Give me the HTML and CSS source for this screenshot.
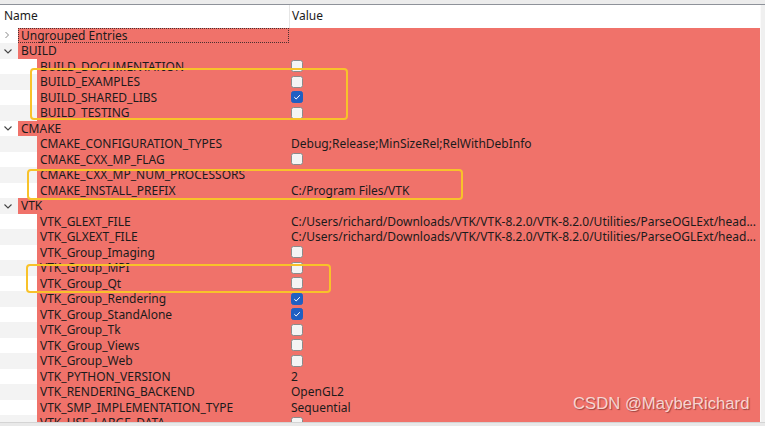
FILE: index.html
```html
<!DOCTYPE html>
<html>
<head>
<meta charset="utf-8">
<link rel="stylesheet" href="styles.css">
</head>
<body>
<div class="window">
  <div class="topband"></div>
  <div class="main">
    <div class="tree">
      <div class="header">
        <div class="hname">Name</div>
        <div class="hvalue">Value</div>
      </div>
      <div class="rows">
        <div class="row group">
          <div class="ind"><svg class="arr" width="8" height="8" viewBox="0 0 8 8"><path d="M2.5 1 L5.5 4 L2.5 7" fill="none" stroke="#8a8a8a" stroke-width="1"/></svg></div>
          <div class="red"><div class="name focus">Ungrouped Entries</div><div class="value"></div></div>
        </div>
        <div class="row group">
          <div class="ind"><svg class="arr" width="10" height="8" viewBox="0 0 10 8"><path d="M1.5 2.5 L5 6 L8.5 2.5" fill="none" stroke="#444" stroke-width="1.1"/></svg></div>
          <div class="red"><div class="name">BUILD</div><div class="value"></div></div>
        </div>
        <div class="row child"><div class="ind"></div><div class="red"><div class="name">BUILD_DOCUMENTATION</div><div class="value"><span class="cb"></span></div></div></div>
        <div class="row child"><div class="ind"></div><div class="red"><div class="name">BUILD_EXAMPLES</div><div class="value"><span class="cb"></span></div></div></div>
        <div class="row child"><div class="ind"></div><div class="red"><div class="name">BUILD_SHARED_LIBS</div><div class="value"><span class="cb on"><svg width="12" height="12" viewBox="0 0 12 12"><path d="M3.3 6.2 L5.2 8 L8.8 4.2" fill="none" stroke="#fff" stroke-width="1"/></svg></span></div></div></div>
        <div class="row child"><div class="ind"></div><div class="red"><div class="name">BUILD_TESTING</div><div class="value"><span class="cb"></span></div></div></div>
        <div class="row group">
          <div class="ind"><svg class="arr" width="10" height="8" viewBox="0 0 10 8"><path d="M1.5 2.5 L5 6 L8.5 2.5" fill="none" stroke="#444" stroke-width="1.1"/></svg></div>
          <div class="red"><div class="name">CMAKE</div><div class="value"></div></div>
        </div>
        <div class="row child"><div class="ind"></div><div class="red"><div class="name">CMAKE_CONFIGURATION_TYPES</div><div class="value">Debug;Release;MinSizeRel;RelWithDebInfo</div></div></div>
        <div class="row child"><div class="ind"></div><div class="red"><div class="name">CMAKE_CXX_MP_FLAG</div><div class="value"><span class="cb"></span></div></div></div>
        <div class="row child"><div class="ind"></div><div class="red"><div class="name">CMAKE_CXX_MP_NUM_PROCESSORS</div><div class="value"></div></div></div>
        <div class="row child"><div class="ind"></div><div class="red"><div class="name">CMAKE_INSTALL_PREFIX</div><div class="value">C:/Program Files/VTK</div></div></div>
        <div class="row group">
          <div class="ind"><svg class="arr" width="10" height="8" viewBox="0 0 10 8"><path d="M1.5 2.5 L5 6 L8.5 2.5" fill="none" stroke="#444" stroke-width="1.1"/></svg></div>
          <div class="red"><div class="name">VTK</div><div class="value"></div></div>
        </div>
        <div class="row child"><div class="ind"></div><div class="red"><div class="name">VTK_GLEXT_FILE</div><div class="value">C:/Users/richard/Downloads/VTK/VTK-8.2.0/VTK-8.2.0/Utilities/ParseOGLExt/head...</div></div></div>
        <div class="row child"><div class="ind"></div><div class="red"><div class="name">VTK_GLXEXT_FILE</div><div class="value">C:/Users/richard/Downloads/VTK/VTK-8.2.0/VTK-8.2.0/Utilities/ParseOGLExt/head...</div></div></div>
        <div class="row child"><div class="ind"></div><div class="red"><div class="name">VTK_Group_Imaging</div><div class="value"><span class="cb"></span></div></div></div>
        <div class="row child"><div class="ind"></div><div class="red"><div class="name">VTK_Group_MPI</div><div class="value"><span class="cb"></span></div></div></div>
        <div class="row child"><div class="ind"></div><div class="red"><div class="name">VTK_Group_Qt</div><div class="value"><span class="cb"></span></div></div></div>
        <div class="row child"><div class="ind"></div><div class="red"><div class="name">VTK_Group_Rendering</div><div class="value"><span class="cb on"><svg width="12" height="12" viewBox="0 0 12 12"><path d="M3.3 6.2 L5.2 8 L8.8 4.2" fill="none" stroke="#fff" stroke-width="1"/></svg></span></div></div></div>
        <div class="row child"><div class="ind"></div><div class="red"><div class="name">VTK_Group_StandAlone</div><div class="value"><span class="cb on"><svg width="12" height="12" viewBox="0 0 12 12"><path d="M3.3 6.2 L5.2 8 L8.8 4.2" fill="none" stroke="#fff" stroke-width="1"/></svg></span></div></div></div>
        <div class="row child"><div class="ind"></div><div class="red"><div class="name">VTK_Group_Tk</div><div class="value"><span class="cb"></span></div></div></div>
        <div class="row child"><div class="ind"></div><div class="red"><div class="name">VTK_Group_Views</div><div class="value"><span class="cb"></span></div></div></div>
        <div class="row child"><div class="ind"></div><div class="red"><div class="name">VTK_Group_Web</div><div class="value"><span class="cb"></span></div></div></div>
        <div class="row child"><div class="ind"></div><div class="red"><div class="name">VTK_PYTHON_VERSION</div><div class="value">2</div></div></div>
        <div class="row child"><div class="ind"></div><div class="red"><div class="name">VTK_RENDERING_BACKEND</div><div class="value">OpenGL2</div></div></div>
        <div class="row child"><div class="ind"></div><div class="red"><div class="name">VTK_SMP_IMPLEMENTATION_TYPE</div><div class="value">Sequential</div></div></div>
        <div class="row child"><div class="ind"></div><div class="red"><div class="name">VTK_USE_LARGE_DATA</div><div class="value"><span class="cb"></span></div></div></div>
      </div>
    </div>
    <div class="vscroll"></div>
  </div>
  <div class="hscroll"></div>

  <div class="mark mark1"></div>
  <div class="mark mark2"></div>
  <div class="mark mark3"></div>
  <div class="watermark">CSDN @MaybeRichard</div>
</div>
</body>
</html>
```
FILE: styles.css
```css
html, body {
  margin: 0;
  padding: 0;
}
body {
  width: 765px;
  height: 426px;
  overflow: hidden;
  background: #ffffff;
  font-family: "Noto Sans", "Open Sans", sans-serif;
  font-size: 12px;
  color: #1b1b1b;
}
.window {
  position: relative;
  width: 765px;
  height: 426px;
  display: flex;
  flex-direction: column;
  overflow: hidden;
}
.topband {
  height: 4px;
  flex: none;
  background: #ececec;
  border-bottom: 1px solid #8e929a;
}
.main {
  flex: 1;
  display: flex;
  min-height: 0;
}
.tree {
  width: 760px;
  flex: none;
  display: flex;
  flex-direction: column;
  overflow: hidden;
}
.header {
  height: 22.5px;
  flex: none;
  display: flex;
  background: #ffffff;
  line-height: 22px;
}
.hname {
  width: 285px;
  padding-left: 4px;
  border-right: 1px solid #e6e6e6;
}
.hvalue {
  padding-left: 2px;
}
.rows {
  flex: 1;
  overflow: hidden;
}
.row {
  height: 15.5px;
  display: flex;
  background: #ffffff;
  line-height: 15.5px;
}
.row:nth-child(even) {
  background: #f3f3f3;
}
.ind {
  flex: none;
  display: flex;
  align-items: center;
}
.group .ind {
  width: 18px;
  padding-left: 3px;
  box-sizing: border-box;
}
.child .ind {
  width: 37px;
}
.red {
  flex: 1;
  display: flex;
  background: #f0726a;
}
.name {
  box-sizing: border-box;
  padding-left: 3px;
  white-space: nowrap;
  overflow: hidden;
}
.group .name {
  width: 271px;
}
.child .name {
  width: 252px;
}
.focus {
  outline: 1px dotted #4a3030;
  outline-offset: -1px;
}
.value {
  flex: 1;
  display: flex;
  align-items: center;
  padding-left: 2px;
  white-space: nowrap;
  overflow: hidden;
}
.cb {
  width: 12px;
  height: 12px;
  box-sizing: border-box;
  border: 1px solid #8b8b8b;
  border-radius: 2.5px;
  background: #f4f4f4;
  display: block;
}
.cb.on {
  background: #1f5fc2;
  border-color: #1f5fc2;
}
.cb svg {
  display: block;
  margin: -1px;
}
.vscroll {
  flex: 1;
  background: #f0f0f0;
  border-left: 1px solid #fafafa;
}
.hscroll {
  height: 3px;
  flex: none;
  background: #e9e9e9;
  border-top: 1px solid #d4d4d4;
}
.mark {
  position: absolute;
  border: 2.5px solid #f8c22a;
  border-radius: 4px;
  box-sizing: border-box;
}
.mark1 {
  left: 30px;
  top: 68px;
  width: 318px;
  height: 52px;
}
.mark2 {
  left: 27px;
  top: 169px;
  width: 436px;
  height: 31px;
}
.mark3 {
  left: 26px;
  top: 264px;
  width: 305px;
  height: 29px;
}
.watermark {
  position: absolute;
  left: 573px;
  top: 394px;
  font-family: "Liberation Sans", Arial, sans-serif;
  font-size: 16.7px;
  line-height: 20px;
  color: rgba(255, 235, 232, 0.85);
  text-shadow: 1px 1px 1px rgba(90, 30, 30, 0.55);
  white-space: nowrap;
}
```
